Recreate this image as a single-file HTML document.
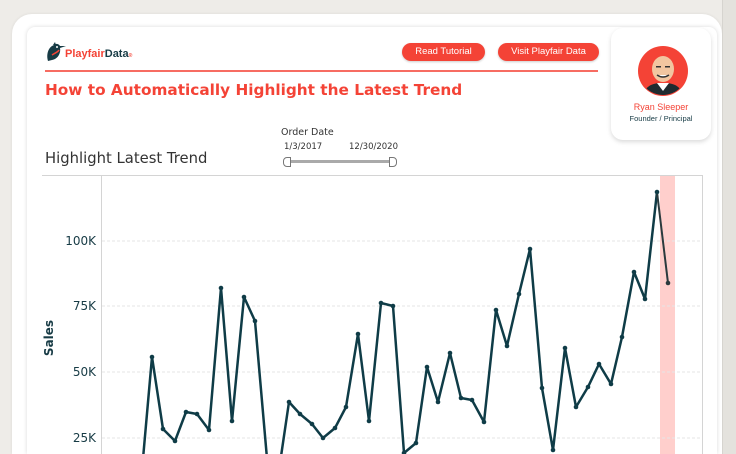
<!DOCTYPE html>
<html style="overflow:hidden;width:736px;height:454px"><head><meta charset="utf-8"><style>
*{margin:0;padding:0;box-sizing:border-box}
body{width:736px;height:454px;overflow:hidden;background:#eeece8;font-family:"DejaVu Sans","Liberation Sans",sans-serif;position:relative}
.outer{position:absolute;left:12px;top:14px;width:710px;height:440px;background:#fff;border-radius:20px 20px 0 0;box-shadow:0 0 3px rgba(0,0,0,.08)}
.bar{position:absolute;left:722px;top:0;width:14px;height:454px;background:#e4e2dd;border-left:1px solid #d6d4cf}
.card{position:absolute;left:27px;top:27px;width:690px;height:427px;background:#fff;border-radius:8px 8px 0 0;box-shadow:0 0 4px rgba(0,0,0,.15)}
.prof{position:absolute;left:611px;top:28px;width:100px;height:112px;background:#fff;border-radius:12px;box-shadow:0 2px 5px rgba(0,0,0,.15)}
.btn{position:absolute;top:43px;height:18px;background:#f44336;color:#fff;border-radius:9px;font-family:"Liberation Sans",sans-serif;font-size:9.5px;line-height:18px;text-align:center;box-shadow:0 1px 2px rgba(0,0,0,.2)}
.t{position:absolute;white-space:nowrap}
</style></head><body>
<div class="outer"></div>
<div class="bar"></div>
<div class="card"></div>
<div class="prof"></div>
<svg class="t" style="left:44px;top:41px" width="24" height="22" viewBox="0 0 24 22"><path d="M4 20 C2 14 4 6 10 4 C12 2 15 3 16 5 L22 5 L16 7 C17 12 14 18 8 19 Z" fill="#173b45"/><path d="M9 4 L11 1 L12 4" fill="#173b45"/><circle cx="13" cy="6" r="1" fill="#fff"/><path d="M8 14 C11 12 14 11 15 9" stroke="#f44336" stroke-width="1.5" fill="none"/></svg>
<div class="t" style="left:65px;top:48px;font-family:'Liberation Sans',sans-serif;font-size:11px;font-weight:bold;color:#f44336">Playfair<span style="color:#173b45">Data</span><span style="font-size:5px;color:#f44336">®</span></div>
<div class="btn" style="left:402px;width:83px">Read Tutorial</div>
<div class="btn" style="left:498px;width:101px">Visit Playfair Data</div>
<div class="t" style="left:45px;top:70px;width:553px;height:2px;background:#f76c62"></div>
<div class="t" style="left:45px;top:81px;font-size:15.3px;font-weight:bold;color:#f44336">How to Automatically Highlight the Latest Trend</div>
<svg class="t" style="left:637px;top:45px" width="52" height="52" viewBox="0 0 52 52"><circle cx="26" cy="26" r="25" fill="#f44336"/><clipPath id="c"><circle cx="26" cy="26" r="24"/></clipPath><g clip-path="url(#c)"><path d="M6 52 C8 40 16 38 26 38 C36 38 44 40 46 52Z" fill="#1f2b30"/><path d="M20 38 L26 46 L32 38Z" fill="#fff"/><ellipse cx="26" cy="24" rx="11" ry="13" fill="#f2c6a0"/><path d="M20 30 Q26 34 32 30" stroke="#333" stroke-width="1.5" fill="#fff"/><rect x="19" y="21" width="5" height="1.5" fill="#333"/><rect x="28" y="21" width="5" height="1.5" fill="#333"/></g></svg>
<div class="t" style="left:611px;top:102px;width:100px;text-align:center;font-family:'Liberation Sans',sans-serif;font-size:9px;color:#f44336">Ryan Sleeper</div>
<div class="t" style="left:611px;top:114px;width:100px;text-align:center;font-family:'Liberation Sans',sans-serif;font-size:7.5px;color:#173b45">Founder / Principal</div>
<div class="t" style="left:45px;top:150px;font-size:14.8px;color:#333">Highlight Latest Trend</div>
<div class="t" style="left:281px;top:127px;font-size:9.5px;color:#333">Order Date</div>
<div class="t" style="left:284px;top:142px;font-size:8.5px;color:#333">1/3/2017</div>
<div class="t" style="left:349px;top:142px;font-size:8.5px;color:#333">12/30/2020</div>
<div class="t" style="left:288px;top:160px;width:106px;height:3px;background:#aaa"></div>
<div class="t" style="left:283px;top:157px;width:8px;height:10px;border:1px solid #777;background:#fff;border-radius:4px 0 0 4px"></div>
<div class="t" style="left:389px;top:157px;width:8px;height:10px;border:1px solid #777;background:#fff;border-radius:0 4px 4px 0"></div>
<svg class="t" style="left:0;top:0" width="736" height="454">
<line x1="42" y1="175.5" x2="703" y2="175.5" stroke="#d4d4d4"/>
<line x1="101.5" y1="176" x2="101.5" y2="454" stroke="#d4d4d4"/>
<line x1="702.5" y1="176" x2="702.5" y2="454" stroke="#d4d4d4"/>
<rect x="660" y="176" width="15" height="278" fill="#ffcfcc"/>
<g stroke="#e6e6e6" stroke-dasharray="3,2"><line x1="102" y1="241" x2="702" y2="241"/><line x1="102" y1="306" x2="702" y2="306"/><line x1="102" y1="372" x2="702" y2="372"/><line x1="102" y1="438" x2="702" y2="438"/></g>
<g font-size="12" fill="#173b45" text-anchor="end" font-family="DejaVu Sans,sans-serif"><text x="96" y="245">100K</text><text x="96" y="310">75K</text><text x="96" y="376">50K</text><text x="96" y="442">25K</text></g>
<text transform="translate(53,338) rotate(-90)" text-anchor="middle" font-size="12" font-weight="bold" fill="#173b45" font-family="DejaVu Sans,sans-serif">Sales</text>
<polyline fill="none" stroke="#0f3c47" stroke-width="2.5" stroke-linejoin="round" points="142,470 152,357 163,429 175,441 186,412 197,414 209,430 221,288 232,421 244,297 255,321 268,470 279,470 289,402 300,414 312,424 323,438 335,428 346,407 358,334 369,421 381,303 393,306 404,453 416,443 427,367 438,402 450,353 461,398 472,400 484,422 496,310 507,346 519,294 530,249 542,388 553,450 565,348 576,407 588,387 599,364 611,384 622,337 634,272 645,299 657,192"/>
<polyline fill="none" stroke="#2b3a3d" stroke-width="2" points="657,192 668,283"/>
<g fill="#0f3c47"><circle cx="152" cy="357" r="2.3"/><circle cx="163" cy="429" r="2.3"/><circle cx="175" cy="441" r="2.3"/><circle cx="186" cy="412" r="2.3"/><circle cx="197" cy="414" r="2.3"/><circle cx="209" cy="430" r="2.3"/><circle cx="221" cy="288" r="2.3"/><circle cx="232" cy="421" r="2.3"/><circle cx="244" cy="297" r="2.3"/><circle cx="255" cy="321" r="2.3"/><circle cx="289" cy="402" r="2.3"/><circle cx="300" cy="414" r="2.3"/><circle cx="312" cy="424" r="2.3"/><circle cx="323" cy="438" r="2.3"/><circle cx="335" cy="428" r="2.3"/><circle cx="346" cy="407" r="2.3"/><circle cx="358" cy="334" r="2.3"/><circle cx="369" cy="421" r="2.3"/><circle cx="381" cy="303" r="2.3"/><circle cx="393" cy="306" r="2.3"/><circle cx="404" cy="453" r="2.3"/><circle cx="416" cy="443" r="2.3"/><circle cx="427" cy="367" r="2.3"/><circle cx="438" cy="402" r="2.3"/><circle cx="450" cy="353" r="2.3"/><circle cx="461" cy="398" r="2.3"/><circle cx="472" cy="400" r="2.3"/><circle cx="484" cy="422" r="2.3"/><circle cx="496" cy="310" r="2.3"/><circle cx="507" cy="346" r="2.3"/><circle cx="519" cy="294" r="2.3"/><circle cx="530" cy="249" r="2.3"/><circle cx="542" cy="388" r="2.3"/><circle cx="553" cy="450" r="2.3"/><circle cx="565" cy="348" r="2.3"/><circle cx="576" cy="407" r="2.3"/><circle cx="588" cy="387" r="2.3"/><circle cx="599" cy="364" r="2.3"/><circle cx="611" cy="384" r="2.3"/><circle cx="622" cy="337" r="2.3"/><circle cx="634" cy="272" r="2.3"/><circle cx="645" cy="299" r="2.3"/><circle cx="657" cy="192" r="2.3"/><circle cx="668" cy="283" r="2.3" fill="#2b3a3d"/></g>
</svg>
</body></html>
